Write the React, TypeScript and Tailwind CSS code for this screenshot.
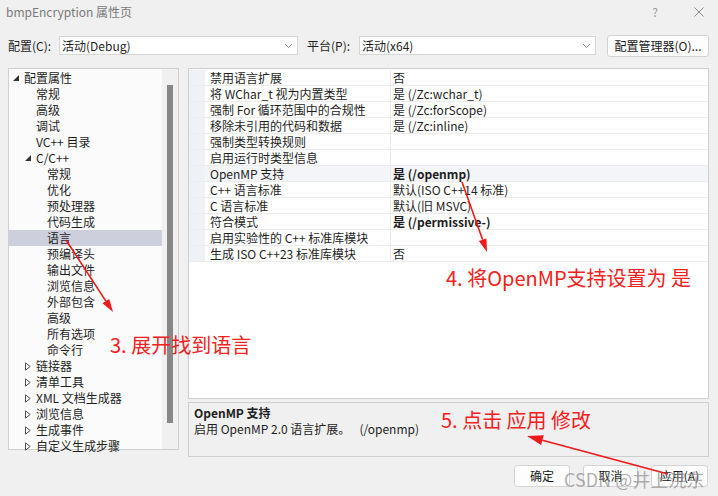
import React from 'react';

const font = { fontFamily: '"Noto Sans CJK SC", "Noto Sans", sans-serif' };

type TreeItem = { label: string; level: 0 | 1 | 2; arrow?: 'open' | 'closed'; selected?: boolean };

const tree: TreeItem[] = [
  { label: '配置属性', level: 0, arrow: 'open' },
  { label: '常规', level: 1 },
  { label: '高级', level: 1 },
  { label: '调试', level: 1 },
  { label: 'VC++ 目录', level: 1 },
  { label: 'C/C++', level: 1, arrow: 'open' },
  { label: '常规', level: 2 },
  { label: '优化', level: 2 },
  { label: '预处理器', level: 2 },
  { label: '代码生成', level: 2 },
  { label: '语言', level: 2, selected: true },
  { label: '预编译头', level: 2 },
  { label: '输出文件', level: 2 },
  { label: '浏览信息', level: 2 },
  { label: '外部包含', level: 2 },
  { label: '高级', level: 2 },
  { label: '所有选项', level: 2 },
  { label: '命令行', level: 2 },
  { label: '链接器', level: 1, arrow: 'closed' },
  { label: '清单工具', level: 1, arrow: 'closed' },
  { label: 'XML 文档生成器', level: 1, arrow: 'closed' },
  { label: '浏览信息', level: 1, arrow: 'closed' },
  { label: '生成事件', level: 1, arrow: 'closed' },
  { label: '自定义生成步骤', level: 1, arrow: 'closed' },
];

const indent = ['pl-[4px]', 'pl-[16px]', 'pl-[27px]'];

const props: [string, string, boolean?, boolean?][] = [
  ['禁用语言扩展', '否'],
  ['将 WChar_t 视为内置类型', '是 (/Zc:wchar_t)'],
  ['强制 For 循环范围中的合规性', '是 (/Zc:forScope)'],
  ['移除未引用的代码和数据', '是 (/Zc:inline)'],
  ['强制类型转换规则', ''],
  ['启用运行时类型信息', ''],
  ['OpenMP 支持', '是 (/openmp)', true, true],
  ['C++ 语言标准', '默认(ISO C++14 标准)'],
  ['C 语言标准', '默认(旧 MSVC)'],
  ['符合模式', '是 (/permissive-)', true],
  ['启用实验性的 C++ 标准库模块', ''],
  ['生成 ISO C++23 标准库模块', '否'],
];

function Chevron() {
  return (
    <svg width="9" height="6" viewBox="0 0 9 6" className="mr-[4px]">
      <path d="M1 1 L4.5 4.5 L8 1" fill="none" stroke="#8a8a8a" strokeWidth="1" />
    </svg>
  );
}

function TreeArrow({ kind }: { kind?: 'open' | 'closed' }) {
  if (!kind) return <span className="w-[11px] shrink-0" />;
  return (
    <span className="w-[11px] shrink-0 flex items-center">
      {kind === 'open' ? (
        <svg width="6" height="6" viewBox="0 0 6 6">
          <path d="M6 0 L6 6 L0 6 Z" fill="#333" />
        </svg>
      ) : (
        <svg width="6" height="9" viewBox="0 0 6 9">
          <path d="M0.5 0.8 L5.2 4.5 L0.5 8.2 Z" fill="none" stroke="#555" strokeWidth="1" />
        </svg>
      )}
    </span>
  );
}

function Arrow({ x1, y1, x2, y2, head = 13, w = 4 }: { x1: number; y1: number; x2: number; y2: number; head?: number; w?: number }) {
  const dx = x2 - x1;
  const dy = y2 - y1;
  const len = Math.hypot(dx, dy);
  const ux = dx / len;
  const uy = dy / len;
  const bx = x2 - ux * head;
  const by = y2 - uy * head;
  const pts = `${x2},${y2} ${bx - uy * w},${by + ux * w} ${bx + uy * w},${by - ux * w}`;
  return (
    <g>
      <line x1={x1} y1={y1} x2={bx} y2={by} stroke="#f01818" strokeWidth="1.6" />
      <polygon points={pts} fill="#f01818" />
    </g>
  );
}

function Button({ children, className }: { children: React.ReactNode; className: string }) {
  return (
    <div className={`h-[22px] flex items-center justify-center bg-[#fdfdfd] border border-[#d3d3d3] rounded-[3px] text-[12px] text-[#1a1a1a] ${className}`}>
      {children}
    </div>
  );
}

export default function App() {
  return (
    <div style={font} className="relative w-[718px] h-[496px] overflow-hidden bg-[#f0f0f0] text-[12px] text-[#1e1e1e]">
      {/* title bar */}
      <div className="h-[24px] flex items-center pl-[6px] pr-[14px]">
        <span className="text-[12px] text-[#7a7a7a]">bmpEncryption 属性页</span>
        <span className="ml-auto text-[12px] text-[#9a9a9a]">?</span>
        <svg width="10" height="10" viewBox="0 0 10 10" className="ml-[36px]">
          <path d="M0.5 0.5 L9.5 9.5 M9.5 0.5 L0.5 9.5" stroke="#8a8a8a" strokeWidth="1" />
        </svg>
      </div>

      {/* configuration row */}
      <div className="mt-[11px] h-[21px] flex items-center pl-[8px]">
        <span className="w-[51px]">配置(C):</span>
        <div className="w-[239px] h-[19px] bg-white border border-[#d6d6d6] flex items-center pl-[2px]">
          <span>活动(Debug)</span>
          <span className="ml-auto"><Chevron /></span>
        </div>
        <span className="ml-[9px] w-[52px]">平台(P):</span>
        <div className="w-[237px] h-[19px] bg-white border border-[#d6d6d6] flex items-center pl-[2px]">
          <span>活动(x64)</span>
          <span className="ml-auto"><Chevron /></span>
        </div>
        <Button className="ml-[11px] w-[102px] h-[21px]">配置管理器(O)...</Button>
      </div>

      {/* main */}
      <div className="mt-[12px] flex pl-[8px] gap-[9px]">
        <div className="w-[171px] h-[382px] border border-[#cfcfcf] bg-[#fbfbfb] flex">
          <div className="flex-1 pt-[1px]">
            {tree.map((t, i) => (
              <div
                key={i}
                className={`h-[16px] flex items-center leading-none ${indent[t.level]} ${t.selected ? 'bg-[#cdd0dc]' : ''}`}
              >
                <TreeArrow kind={t.arrow} />
                <span>{t.label}</span>
              </div>
            ))}
          </div>
          <div className="w-[16px] bg-[#f0f0f0] pt-[16px] flex justify-center">
            <div className="w-[6px] h-[338px] bg-[#878787]" />
          </div>
        </div>

        <div className="w-[521px] flex flex-col gap-[3px]">
          <div className="h-[331px] border border-[#cfcfcf] bg-white pt-[1px]">
            {props.map(([name, value, bold, sel], i) => (
              <div key={i} className={`h-[16px] flex border-b border-[#ececec] leading-none ${sel ? 'bg-[#f3f5f9]' : ''}`}>
                <div className="w-[16px] bg-[#eef2f7]" />
                <div className="w-[185px] pl-[5px] flex items-center">{name}</div>
                <div className={`flex-1 pl-[2px] flex items-center border-l border-[#ececec] ${bold ? 'font-bold' : ''}`}>{value}</div>
              </div>
            ))}
          </div>
          <div className="h-[55px] border border-[#cfcfcf] bg-[#f0f0f0] px-[5px] pt-[2px]">
            <div className="h-[16px] flex items-center font-bold">OpenMP 支持</div>
            <div className="h-[16px] flex items-center">
              <span>启用 OpenMP 2.0 语言扩展。</span>
              <span className="ml-[9px]">(/openmp)</span>
            </div>
          </div>
        </div>
      </div>

      {/* buttons */}
      <div className="mt-[8px] flex justify-end pr-[10px] gap-[13px]">
        <Button className="w-[56px]">确定</Button>
        <Button className="w-[55px]">取消</Button>
        <Button className="w-[57px]">应用(A)</Button>
      </div>

      {/* annotations */}
      <svg className="absolute inset-0 pointer-events-none" width="718" height="496">
        <Arrow x1={66} y1={240} x2={113} y2={312} />
        <Arrow x1={462} y1={182} x2={487} y2={252} />
        <Arrow x1={668} y1={474} x2={527} y2={436} head={16} w={5} />
      </svg>
      <div className="absolute left-[110px] top-[335px] text-[20px] leading-none text-[#f52020] whitespace-nowrap">3. 展开找到语言</div>
      <div className="absolute left-[446px] top-[268px] text-[20px] leading-none text-[#f52020] whitespace-nowrap">4. 将OpenMP支持设置为 是</div>
      <div className="absolute left-[441px] top-[410px] text-[20px] leading-none text-[#f52020] whitespace-nowrap">5. 点击 应用 修改</div>
      <div className="absolute left-[564px] top-[470px] text-[18px] leading-none text-[#8c8c8c]/70 whitespace-nowrap">CSDN @井上浣东</div>
    </div>
  );
}
